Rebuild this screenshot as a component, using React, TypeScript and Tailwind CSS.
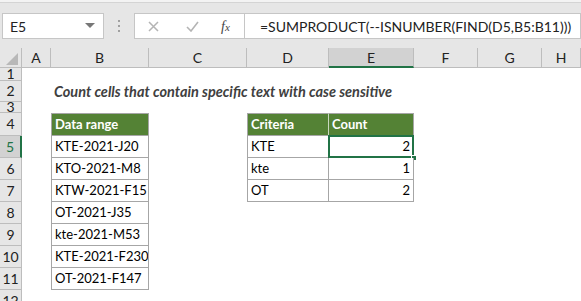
import React from "react"

const cols = ["A", "B", "C", "D", "E", "F", "G", "H"]
const rowHeights = [13, 21, 11, 23, 22, 22, 22, 22, 22, 22, 22, 22]

const dataRange = [
  "KTE-2021-J20",
  "KTO-2021-M8",
  "KTW-2021-F15",
  "OT-2021-J35",
  "kte-2021-M53",
  "KTE-2021-F230",
  "OT-2021-F147",
]

const criteria = [
  { c: "KTE", n: 2 },
  { c: "kte", n: 1 },
  { c: "OT", n: 2 },
]

//------------------------------------------------------------

const Toolbar = () => (
  <div className="flex h-[48px] flex-col bg-[#e6e6e6]">
    <div className="h-[2px] bg-[#f3f3f3]" />
    <div className="h-px bg-[#d4d4d4]" />
    <div className="flex items-start pt-[10px]">
      {/* NAME BOX */}
      <div className="ml-[2px] flex h-[26px] w-[102px] shrink-0 items-center justify-between border border-[#c6c6c6] bg-white pl-[7px] pr-[8px]">
        <span className="text-[14px] text-[#222]">E5</span>
        <svg width="10" height="6" viewBox="0 0 10 6">
          <path d="M0 0 L10 0 L5 5 Z" fill="#777" />
        </svg>
      </div>
      <div className="flex h-[26px] w-[30px] shrink-0 flex-col items-center justify-center gap-[3px]">
        <span className="h-[2px] w-[2px] bg-[#a0a0a0]" />
        <span className="h-[2px] w-[2px] bg-[#a0a0a0]" />
        <span className="h-[2px] w-[2px] bg-[#a0a0a0]" />
      </div>
      {/* FORMULA ICONS */}
      <div className="flex h-[26px] w-[110px] shrink-0 items-center border border-r-0 border-[#c6c6c6] bg-white">
        <svg className="ml-[13px]" width="11" height="11" viewBox="0 0 11 11">
          <path d="M1 1 L10 10 M10 1 L1 10" stroke="#b4b4b4" strokeWidth="1.5" />
        </svg>
        <svg className="ml-[27px]" width="13" height="11" viewBox="0 0 13 11">
          <path d="M1 6 L5 10 L12 1" stroke="#b4b4b4" strokeWidth="1.6" fill="none" />
        </svg>
        <span className="ml-[22px] font-['Liberation_Serif'] text-[14px] italic text-[#444]">
          f<span className="text-[11px]">x</span>
        </span>
      </div>
      <div className="flex h-[26px] min-w-0 flex-1 items-center overflow-hidden border border-[#c6c6c6] bg-white pl-[15px]">
        <span className="whitespace-nowrap text-[14px] text-[#222]">
          =SUMPRODUCT(--ISNUMBER(FIND(D5,B5:B11)))
        </span>
      </div>
    </div>
  </div>
)

const App = () => {
  const tableCell =
    "flex items-center overflow-hidden whitespace-nowrap border-r border-b border-[#a6a6a6] bg-white px-[3px]"
  const headCell =
    "flex items-center overflow-hidden whitespace-nowrap border-r border-b border-[#a6a6a6] bg-[#548235] px-[3px] font-bold text-white"

  return (
    <div className="h-[301px] w-[581px] overflow-hidden bg-white font-['Lato',sans-serif]">
      <Toolbar />

      {/* SHEET */}
      <div className="grid grid-cols-[22px_29px_98px_98px_82px_85px_64px_64px_1fr] grid-rows-[20px_13px_21px_11px_23px_repeat(8,22px)] text-[13px] text-black">
        {/* COLUMN HEADERS */}
        <div className="relative border-r border-b border-[#bdbdbd] bg-[#e6e6e6]">
          <svg className="absolute bottom-[2px] right-[3px]" width="12" height="12" viewBox="0 0 12 12">
            <path d="M12 0 L12 12 L0 12 Z" fill="#b8b8b8" />
          </svg>
        </div>
        {cols.map((c) => (
          <div
            key={c}
            className={
              c === "E"
                ? "flex items-center justify-center border-r border-b-2 border-r-[#bdbdbd] border-b-[#217346] bg-[#d2d2d2] text-[14px] text-[#222]"
                : "flex items-center justify-center border-r border-b border-[#bdbdbd] bg-[#e6e6e6] text-[14px] text-[#222]"
            }
          >
            {c}
          </div>
        ))}

        {/* ROWS */}
        {rowHeights.map((_, i) => {
          const r = i + 1
          return (
            <React.Fragment key={r}>
              <div
                className={
                  r === 5
                    ? "flex items-center justify-center border-r-2 border-b border-r-[#217346] border-b-[#bdbdbd] bg-[#d2d2d2] text-[14px] leading-none text-[#217346]"
                    : "flex items-center justify-center border-r border-b border-[#bdbdbd] bg-[#e6e6e6] text-[14px] leading-none text-[#222]"
                }
              >
                {r}
              </div>

              {/* A */}
              <div />

              {/* B */}
              {r === 2 ? (
                <div className="col-span-7 flex items-center whitespace-nowrap pl-[3px] text-[14.5px] font-bold italic text-[#404040]">
                  Count cells that contain specific text with case sensitive
                </div>
              ) : r === 4 ? (
                <div className={`${headCell} border-t border-l`}>Data range</div>
              ) : r >= 5 && r <= 11 ? (
                <div className={`${tableCell} border-l`}>{dataRange[r - 5]}</div>
              ) : (
                <div />
              )}

              {r !== 2 && (
                <>
                  {/* C */}
                  <div />

                  {/* D + E */}
                  {r === 4 ? (
                    <>
                      <div className={`${headCell} border-t border-l border-r-[#c9d8bf]`}>Criteria</div>
                      <div className={`${headCell} border-t`}>Count</div>
                    </>
                  ) : r >= 5 && r <= 7 ? (
                    <>
                      <div className={`${tableCell} border-l`}>{criteria[r - 5].c}</div>
                      <div className={`${tableCell} relative justify-end overflow-visible`}>
                        {criteria[r - 5].n}
                        {r === 5 && (
                          <>
                            <div className="absolute -left-px -top-px bottom-[-1px] right-[-1px] border-2 border-[#217346]" />
                            <div className="absolute bottom-[-4px] right-[-4px] h-[6px] w-[6px] border border-white bg-[#217346]" />
                          </>
                        )}
                      </div>
                    </>
                  ) : (
                    <>
                      <div />
                      <div />
                    </>
                  )}

                  {/* F G H */}
                  <div />
                  <div />
                  <div />
                </>
              )}
            </React.Fragment>
          )
        })}
      </div>
    </div>
  )
}

export default App
